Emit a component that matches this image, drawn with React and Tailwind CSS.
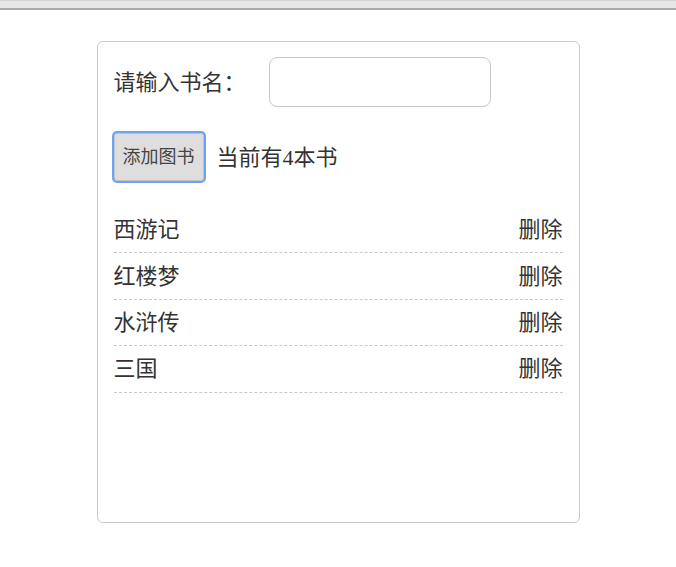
import { useState } from "react";

const FONT = { fontFamily: '"Liberation Serif", "Noto Sans CJK SC", serif' };

export default function App() {
  const [books, setBooks] = useState(["西游记", "红楼梦", "水浒传", "三国"]);
  const [name, setName] = useState("");

  const addBook = () => {
    if (!name.trim()) return;
    setBooks([...books, name.trim()]);
    setName("");
  };

  return (
    <div className="min-h-[567px] bg-white text-[#333]" style={FONT}>
      {/* browser strip at the top */}
      <div className="h-[10px] border-t border-t-[#d4d4d4] border-b-2 border-b-[#a9a9a9] bg-[#e6e6e6]" />

      <div className="mx-auto mt-[31px] h-[482px] w-[483px] rounded-[6px] border border-[#cacaca] px-4 pt-[15px]">
        <div className="flex items-center">
          <label className="w-[155px] shrink-0 text-[22px]">请输入书名：</label>
          <input
            value={name}
            onChange={(e) => setName(e.target.value)}
            className="h-[50px] w-[222px] rounded-[8px] border border-[#c8c8c8] px-2 text-[20px] outline-none"
          />
        </div>

        <div className="mt-[26px] flex items-center">
          <button
            onClick={addBook}
            className="h-[48px] rounded-[3px] border border-[#c2c2c2] bg-[#dedede] px-[8px] text-[18px] text-[#444] ring-2 ring-[#6ea2f7]"
          >
            添加图书
          </button>
          <span className="ml-[13px] text-[22px]">当前有{books.length}本书</span>
        </div>

        <ul className="mt-[26px]">
          {books.map((b, i) => (
            <li
              key={b + i}
              className="flex h-[46.4px] items-center justify-between border-b border-dashed border-[#c8c8c8] text-[22px]"
            >
              <span>{b}</span>
              <button onClick={() => setBooks(books.filter((_, j) => j !== i))}>删除</button>
            </li>
          ))}
        </ul>
      </div>
    </div>
  );
}
